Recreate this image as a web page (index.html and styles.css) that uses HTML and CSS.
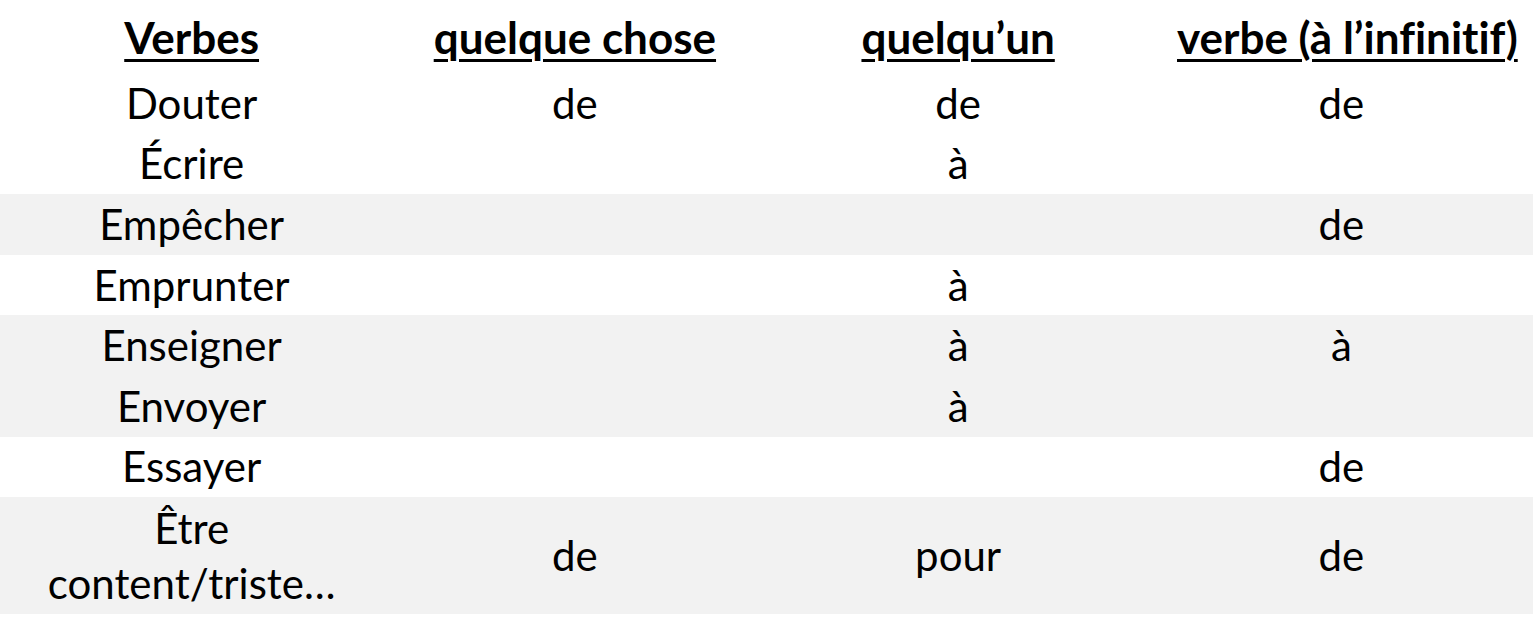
FILE: index.html
```html
<!DOCTYPE html>
<html lang="fr">
<head>
<meta charset="utf-8">
<title>Verbes et prépositions</title>
<link rel="stylesheet" href="styles.css">
</head>
<body>
<table class="grid">
  <colgroup><col class="c"><col class="c"><col class="c"><col class="c"></colgroup>
  <thead>
    <tr class="head">
      <th>Verbes</th>
      <th>quelque chose</th>
      <th>quelqu’un</th>
      <th class="wide">verbe (à l’infinitif)</th>
    </tr>
  </thead>
  <tbody>
    <tr class="row"><td>Douter</td><td>de</td><td>de</td><td>de</td></tr>
    <tr class="row"><td>Écrire</td><td></td><td>à</td><td></td></tr>
    <tr class="row alt"><td>Empêcher</td><td></td><td></td><td>de</td></tr>
    <tr class="row"><td>Emprunter</td><td></td><td>à</td><td></td></tr>
    <tr class="row alt"><td>Enseigner</td><td></td><td>à</td><td>à</td></tr>
    <tr class="row alt"><td>Envoyer</td><td></td><td>à</td><td></td></tr>
    <tr class="row"><td>Essayer</td><td></td><td></td><td>de</td></tr>
    <tr class="row alt tall"><td>Être<br>content/triste…</td><td>de</td><td>pour</td><td>de</td></tr>
  </tbody>
</table>
</body>
</html>
```
FILE: styles.css
```css
html, body {
  margin: 0;
  padding: 0;
  background: #ffffff;
}
body {
  font-family: "Lato", "Open Sans", sans-serif;
  color: #000000;
  font-variant-ligatures: none;
}
.grid {
  width: 1533px;
  border-collapse: collapse;
  table-layout: fixed;
}
.grid .c {
  width: 25%;
}
.grid th,
.grid td {
  padding: 0;
  text-align: center;
  vertical-align: middle;
}
.head th {
  height: 73px;
  font-size: 44px;
  font-weight: 700;
  line-height: 55px;
  vertical-align: bottom;
  padding-bottom: 8px;
  box-sizing: border-box;
  text-decoration: underline;
  text-decoration-thickness: 3px;
  text-underline-offset: 5px;
  white-space: nowrap;
}
.head th.wide {
  padding-left: 12px;
}
.row td {
  height: 60.6px;
  font-size: 42px;
  line-height: 55px;
}
.row.tall td {
  height: 117px;
}
.alt td {
  background: #f2f2f2;
}
```
